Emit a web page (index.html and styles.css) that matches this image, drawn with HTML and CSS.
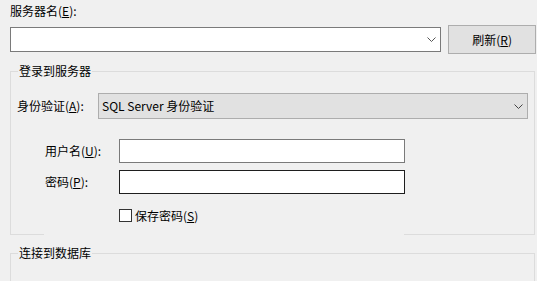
FILE: index.html
```html
<!DOCTYPE html>
<html lang="zh-CN">
<head>
  <meta charset="UTF-8">
  <title>连接到服务器</title>
  <link rel="stylesheet" href="styles.css">
</head>
<body>

<div class="page">
  <div class="field-label">服务器名(<u>E</u>):</div>
  <div class="server-row">
    <div class="combo server-combo">
      <svg class="chev" width="9" height="5" viewBox="0 0 9 5"><polyline points="0.5,0.5 4.5,4.5 8.5,0.5" fill="none" stroke="#555" stroke-width="1"/></svg>
    </div>
    <button class="btn">刷新(<u>R</u>)</button>
  </div>

  <fieldset class="group login-group">
    <legend>登录到服务器</legend>
    <div class="row auth-row">
      <span class="lbl auth-lbl">身份验证(<u>A</u>):</span>
      <div class="combo auth-combo">
        <span class="combo-text">SQL Server 身份验证</span>
        <svg class="chev" width="9" height="5" viewBox="0 0 9 5"><polyline points="0.5,0.5 4.5,4.5 8.5,0.5" fill="none" stroke="#444" stroke-width="1"/></svg>
      </div>
    </div>
    <div class="row cred-row user-row">
      <span class="lbl cred-lbl">用户名(<u>U</u>):</span>
      <div class="textbox"></div>
    </div>
    <div class="row cred-row pass-row">
      <span class="lbl cred-lbl">密码(<u>P</u>):</span>
      <div class="textbox focused"></div>
    </div>
    <div class="row check-row">
      <span class="checkbox"></span>
      <span class="check-text">保存密码(<u>S</u>)</span>
    </div>
    <div class="gap-line"></div>
  </fieldset>

  <fieldset class="group db-group">
    <legend>连接到数据库</legend>
  </fieldset>
</div>

</body>
</html>
```

FILE: styles.css
```css
body { margin: 0; background: #f0f0f0; font-family: "Noto Sans CJK SC", "Microsoft YaHei", sans-serif; font-size: 12px; line-height: 16px; color: #000; overflow: hidden; }
u { text-decoration-thickness: 1px; text-underline-offset: 1px; }
.page { padding: 3px 1px 0 10px; width: 526px; }

.field-label { height: 16px; }
.server-row { display: flex; align-items: center; gap: 7px; margin-top: 6px; }
.combo { box-sizing: border-box; background: #fff; border: 1px solid #7a7a7a; display: flex; align-items: center; justify-content: space-between; }
.server-combo { width: 432px; height: 25px; justify-content: flex-end; padding-right: 4px; }
.chev { display: block; }
.btn { box-sizing: border-box; width: 88px; height: 29px; background: #e1e1e1; border: 1px solid #adadad; font: inherit; color: #000; padding: 0; }

.group { margin: 9px 0 0; padding: 0; border: 1px solid #dcdcdc; width: 525px; box-sizing: border-box; }
.group legend { margin-left: 7px; padding: 0 1px; line-height: 16px; }
.login-group { padding-bottom: 12px; border-bottom-color: transparent; position: relative; }
.gap-line { position: absolute; left: -1px; right: -1px; bottom: -1px; height: 1px; background: linear-gradient(to right, #dcdcdc 0, #dcdcdc 34px, transparent 34px, transparent 394px, #dcdcdc 394px); }

.row { display: flex; align-items: center; }
.auth-row { margin-top: 14px; padding-left: 6px; }
.auth-lbl { width: 81px; }
.auth-combo { width: 430px; height: 26px; background: #e1e1e1; border-color: #adadad; padding: 0 4px 0 3px; }

.cred-row { padding-left: 34px; }
.user-row { margin-top: 20px; }
.pass-row { margin-top: 7px; }
.cred-lbl { width: 74px; }
.textbox { box-sizing: border-box; width: 286px; height: 24px; background: #fff; border: 1px solid #7a7a7a; }
.textbox.focused { border-color: #1e1e1e; }

.check-row { margin-top: 15px; padding-left: 108px; height: 13px; }
.checkbox { box-sizing: border-box; width: 13px; height: 13px; background: #fff; border: 1px solid #333; margin-right: 3px; }

.db-group { margin-top: 10px; height: 36px; border-bottom: 0; }
```
